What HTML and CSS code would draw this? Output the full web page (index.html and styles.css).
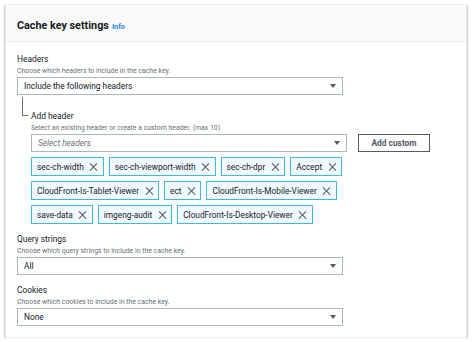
FILE: index.html
```html
<!DOCTYPE html>
<html lang="en">
<head>
  <meta charset="UTF-8">
  <title>Cache key settings</title>
  <link rel="stylesheet" href="styles.css">
</head>
<body>
  <div class="card">
    <div class="card-header">
      <h2 class="title">Cache key settings</h2>
      <span class="info">Info</span>
    </div>
    <div class="card-body">
      <!-- Headers -->
      <div class="field">
        <div class="label">Headers</div>
        <div class="desc">Choose which headers to include in the cache key.</div>
        <div class="select wide">
          <span>Include the following headers</span>
          <span class="caret"></span>
        </div>
      </div>

      <div class="sub">
        <div class="connector"></div>
        <div class="sub-body">
          <div class="label">Add header</div>
          <div class="desc">Select an existing header or create a custom header. (max 10)</div>
          <div class="input-row">
            <div class="select picker">
              <span class="placeholder">Select headers</span>
              <span class="caret"></span>
            </div>
            <button class="btn">Add custom</button>
          </div>
          <div class="tokens">
            <span class="token">sec-ch-width <span class="x"></span></span>
            <span class="token">sec-ch-viewport-width <span class="x"></span></span>
            <span class="token">sec-ch-dpr <span class="x"></span></span>
            <span class="token">Accept <span class="x"></span></span>
            <span class="token">CloudFront-Is-Tablet-Viewer <span class="x"></span></span>
            <span class="token">ect <span class="x"></span></span>
            <span class="token">CloudFront-Is-Mobile-Viewer <span class="x"></span></span>
            <span class="token">save-data <span class="x"></span></span>
            <span class="token">imgeng-audit <span class="x"></span></span>
            <span class="token">CloudFront-Is-Desktop-Viewer <span class="x"></span></span>
          </div>
        </div>
      </div>

      <!-- Query strings -->
      <div class="field spaced">
        <div class="label">Query strings</div>
        <div class="desc">Choose which query strings to include in the cache key.</div>
        <div class="select wide">
          <span>All</span>
          <span class="caret"></span>
        </div>
      </div>

      <!-- Cookies -->
      <div class="field spaced">
        <div class="label">Cookies</div>
        <div class="desc">Choose which cookies to include in the cache key.</div>
        <div class="select wide">
          <span>None</span>
          <span class="caret"></span>
        </div>
      </div>
    </div>
  </div>
</body>
</html>
```

FILE: styles.css
```css
body {
  margin: 0;
  padding: 4px 7px 0 5px;
  background: #ffffff;
  font-family: Roboto, "Open Sans", sans-serif;
  color: #16191f;
}

.card {
  border: 1px solid #eaeded;
  background: #fff;
  box-shadow: 0 1px 1px 0 rgba(0, 28, 36, 0.3), 1px 1px 1px 0 rgba(0, 28, 36, 0.15), -1px 1px 1px 0 rgba(0, 28, 36, 0.15);
}

.card-header {
  display: flex;
  align-items: baseline;
  gap: 3px;
  height: 37px;
  box-sizing: border-box;
  padding: 12px 11px 0;
  background: #fafafa;
  border-bottom: 1px solid #eaeded;
}
.title {
  margin: 0;
  font-size: 10.8px;
  font-weight: 700;
  line-height: 17px;
}
.info {
  font-size: 7.4px;
  font-weight: 700;
  color: #1b8fd6;
}

.card-body {
  padding: 10px 11px 11px;
}

.label {
  font-size: 8.4px;
  line-height: 14px;
}
.desc {
  font-size: 6.9px;
  line-height: 11px;
  color: #687078;
}

.select {
  display: flex;
  align-items: center;
  justify-content: space-between;
  height: 18px;
  box-sizing: border-box;
  padding: 0 6px;
  border: 1px solid #aab7b8;
  font-size: 8.3px;
}
.wide {
  width: 326px;
}
.caret {
  width: 0;
  height: 0;
  border-left: 3px solid transparent;
  border-right: 3px solid transparent;
  border-top: 4px solid #545b64;
}
.placeholder {
  font-style: italic;
  color: #687078;
}

/* nested "Add header" block */
.sub {
  display: flex;
  align-items: flex-start;
}
.connector {
  width: 5px;
  height: 18px;
  margin: 2px 3px 0 5px;
  border-left: 1px solid #687078;
  border-bottom: 1px solid #687078;
}
.sub-body {
  padding-top: 14px;
}
.input-row {
  display: flex;
  gap: 11px;
}
.picker {
  width: 316px;
}
.btn {
  width: 72px;
  height: 18px;
  padding: 0;
  border: 1px solid #545b64;
  background: #fff;
  font-family: inherit;
  font-size: 8.4px;
  font-weight: 700;
  color: #545b64;
}

.tokens {
  display: flex;
  flex-wrap: wrap;
  gap: 5px;
  width: 316px;
  margin-top: 5px;
}
.token {
  display: inline-flex;
  align-items: center;
  gap: 6px;
  height: 19px;
  box-sizing: border-box;
  padding: 0 5px;
  border: 1px solid #44b9d6;
  background: #f1faff;
  font-size: 8.3px;
  color: #16191f;
}
.x {
  position: relative;
  width: 8px;
  height: 8px;
}
.x::before,
.x::after {
  content: "";
  position: absolute;
  left: 3.5px;
  top: -1px;
  width: 1px;
  height: 10px;
  background: #545b64;
  transform: rotate(45deg);
}
.x::after {
  transform: rotate(-45deg);
}

.spaced {
  margin-top: 8px;
}
```
